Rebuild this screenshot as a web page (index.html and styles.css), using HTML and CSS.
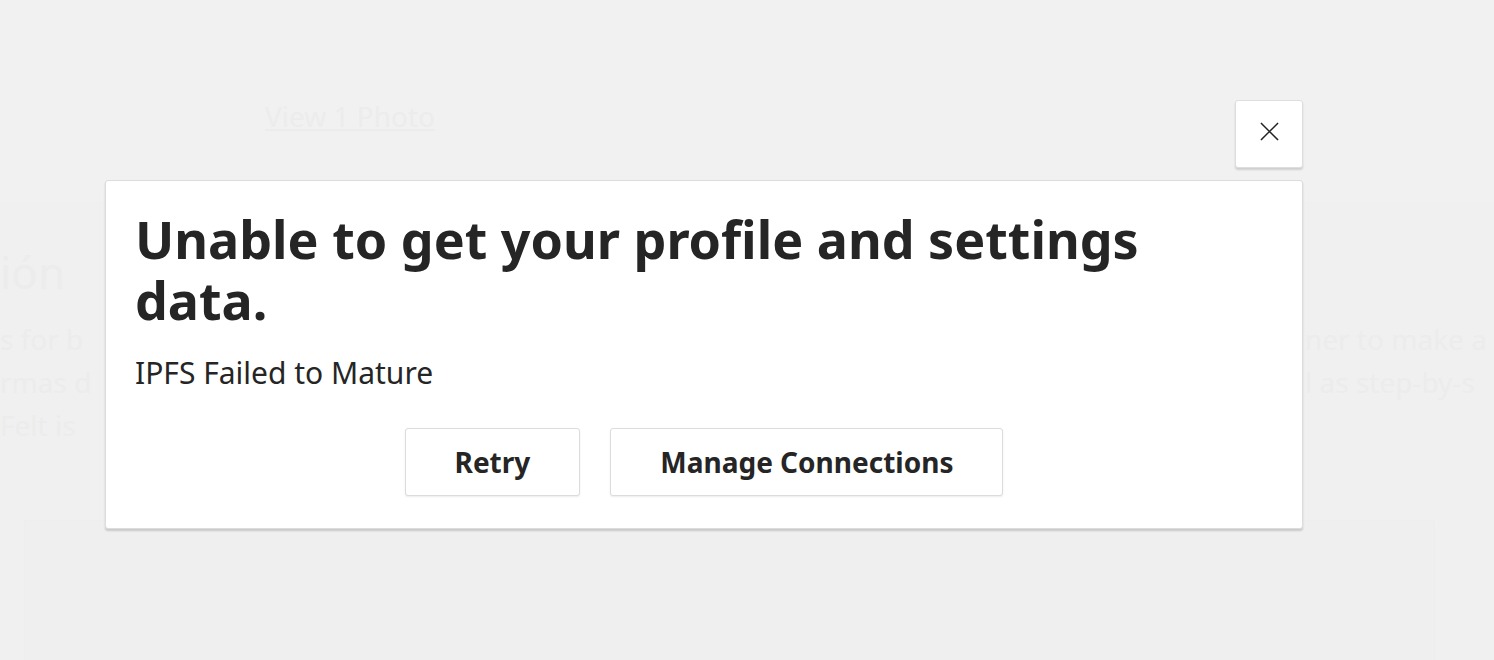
FILE: index.html
```html
<!DOCTYPE html>
<html lang="en">
<head>
<meta charset="utf-8">
<title>Error</title>
<link rel="stylesheet" href="styles.css">
</head>
<body>
<div class="page">
  <header class="ghost-header">
    <span class="ghost-link">View 1 Photo</span>
  </header>
  <section class="ghost-body">
    <div class="ghost-row ghost-heading">
      <div class="ghost-left">ión</div>
      <div class="ghost-mid"></div>
      <div class="ghost-right"></div>
    </div>
    <div class="ghost-row">
      <div class="ghost-left">s for b</div>
      <div class="ghost-mid"></div>
      <div class="ghost-right">ner to make a</div>
    </div>
    <div class="ghost-row">
      <div class="ghost-left">rmas d</div>
      <div class="ghost-mid"></div>
      <div class="ghost-right">l as step-by-s</div>
    </div>
    <div class="ghost-row">
      <div class="ghost-left">Felt is</div>
      <div class="ghost-mid"></div>
      <div class="ghost-right"></div>
    </div>
    <div class="ghost-card"></div>
  </section>

  <div class="dialog-wrap">
    <button class="close-btn" aria-label="Close">
      <svg width="19" height="19" viewBox="0 0 20 20" aria-hidden="true">
        <path d="M1 1 L19 19 M19 1 L1 19" stroke="#222" stroke-width="1.6" fill="none"/>
      </svg>
    </button>
    <div class="modal">
      <h1 class="modal-title">Unable to get your profile and settings data.</h1>
      <p class="modal-text">IPFS Failed to Mature</p>
      <div class="modal-actions">
        <button class="btn">Retry</button>
        <button class="btn">Manage Connections</button>
      </div>
    </div>
  </div>
</div>
</body>
</html>
```

FILE: styles.css
```css
* { box-sizing: border-box; }

html, body {
  margin: 0;
  padding: 0;
  height: 100%;
}

body {
  background: #f0f0f0;
  font-family: "Noto Sans", "Open Sans", "Liberation Sans", sans-serif;
  color: #252525;
  overflow: hidden;
}

.page {
  position: relative;
  width: 1494px;
  height: 660px;
  overflow: hidden;
}

/* ghost page behind the overlay */
.ghost-header {
  height: 203px;
  background: #f1f1f1;
  border-bottom: 1px solid #efefef;
  padding: 96px 0 0 265px;
}

.ghost-link {
  font-size: 28px;
  line-height: 40px;
  color: #ececec;
  text-decoration: underline;
}

.ghost-body {
  padding-top: 44px;
  color: #ececec;
}

.ghost-row {
  display: grid;
  grid-template-columns: 105px 1198px 191px;
  font-size: 28px;
  line-height: 43px;
  height: 43px;
  white-space: nowrap;
}

.ghost-heading {
  font-size: 44px;
  line-height: 50px;
  height: 71px;
}

.ghost-right {
  padding-left: 2px;
}

.ghost-card {
  margin: 73px 59px 0 24px;
  height: 200px;
  border: 1px solid #eeeeee;
  background: #efefef;
}

/* dialog */
.dialog-wrap {
  position: absolute;
  left: 105px;
  top: 100px;
  width: 1198px;
  display: flex;
  flex-direction: column;
  align-items: flex-end;
  gap: 12px;
}

.close-btn {
  width: 68px;
  height: 68px;
  background: #fff;
  border: 1px solid #dedede;
  border-radius: 3px;
  box-shadow: 0 2px 2px rgba(0, 0, 0, 0.14);
  display: flex;
  align-items: center;
  justify-content: center;
  padding: 0 0 6px 0;
  margin: 0;
  cursor: pointer;
}

.modal {
  width: 100%;
  background: #fff;
  border: 1px solid #dcdcdc;
  border-radius: 3px;
  box-shadow: 0 2px 2px rgba(0, 0, 0, 0.16);
  padding: 27px 29px 32px 29px;
}

.modal-title {
  margin: 0;
  font-size: 52px;
  line-height: 61px;
  font-weight: 700;
  color: #252525;
  max-width: 1100px;
}

.modal-text {
  margin: 22px 0 0 0;
  font-size: 30px;
  line-height: 42px;
  color: #252525;
}

.modal-actions {
  margin-top: 34px;
  display: flex;
  justify-content: center;
  gap: 30px;
}

.btn {
  height: 68px;
  padding: 0 49px;
  background: #fff;
  border: 1px solid #dcdcdc;
  border-radius: 3px;
  box-shadow: 0 1px 2px rgba(0, 0, 0, 0.08);
  font-family: "Noto Sans", "Open Sans", "Liberation Sans", sans-serif;
  font-size: 28px;
  font-weight: 700;
  color: #252525;
  cursor: pointer;
}
```
